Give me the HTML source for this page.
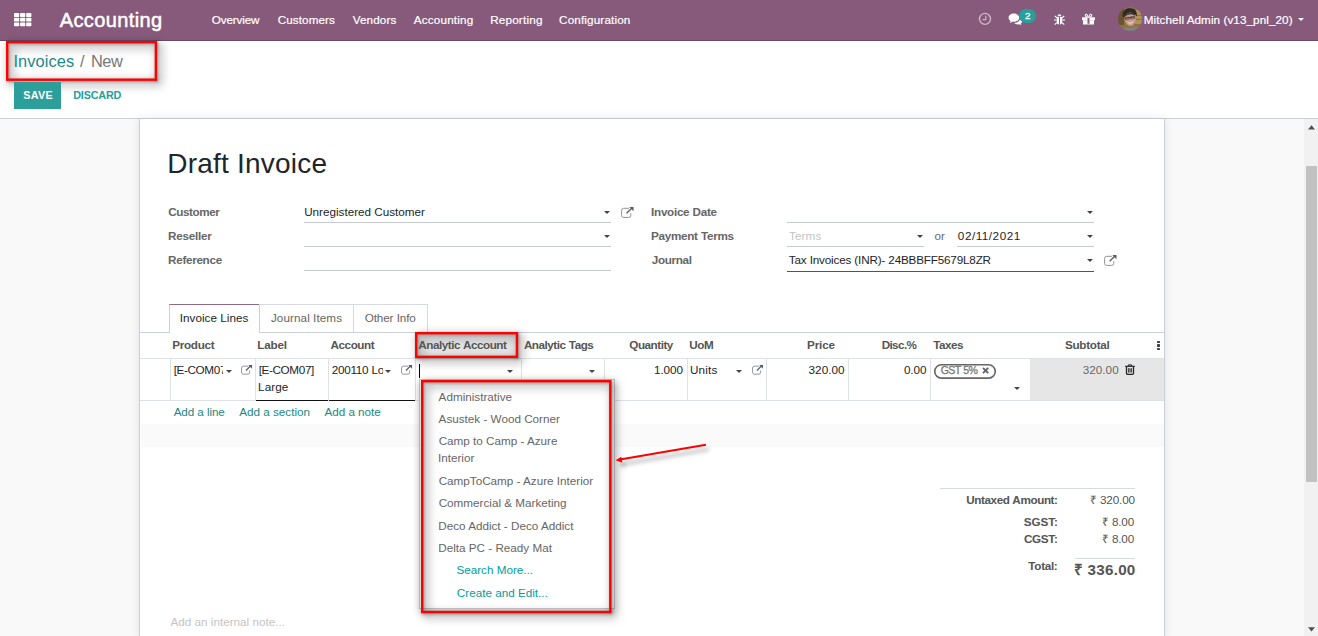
<!DOCTYPE html>
<html lang="en">
<head>
<meta charset="utf-8">
<title>Odoo - Invoices / New</title>
<style>
*{box-sizing:border-box;}
html,body{margin:0;padding:0;}
body{width:1318px;height:636px;overflow:hidden;position:relative;background:#f9f9f9;font-family:"Liberation Sans",sans-serif;font-size:13px;color:#4c4c4c;}
.t{position:absolute;white-space:nowrap;}
.b{position:absolute;}
.ul{position:absolute;height:1px;background:#c8ccd1;}
.caret{position:absolute;width:0;height:0;margin-left:.25px;border-left:3.8px solid transparent;border-right:3.8px solid transparent;border-top:3.9px solid #444;}
.vl{position:absolute;width:1px;background:#dee2e6;}
.hl{position:absolute;height:1px;background:#dee2e6;}
svg{position:absolute;overflow:visible;}
.rb{filter:drop-shadow(1px 1.5px 1.5px rgba(0,0,0,.38)) drop-shadow(3px 3.5px 5px rgba(0,0,0,.55));}

</style>
</head>
<body>
<!-- navbar -->
<div class="b" style="left:0;top:0;width:1318px;height:41px;background:#875a7b;border-bottom:1px solid #6d4964;"></div>
<svg style="left:14px;top:12.800px" width="17.400" height="13.300" viewBox="0 0 17.4 13.3"><g fill="#fff"><rect x="0" y="0" width="5.200" height="3.900" rx=".7"/><rect x="6.1" y="0" width="5.200" height="3.900" rx=".7"/><rect x="12.2" y="0" width="5.200" height="3.900" rx=".7"/><rect x="0" y="4.7" width="5.200" height="3.900" rx=".7"/><rect x="6.1" y="4.7" width="5.200" height="3.900" rx=".7"/><rect x="12.2" y="4.7" width="5.200" height="3.900" rx=".7"/><rect x="0" y="9.4" width="5.200" height="3.900" rx=".7"/><rect x="6.1" y="9.4" width="5.200" height="3.900" rx=".7"/><rect x="12.2" y="9.4" width="5.200" height="3.900" rx=".7"/></g></svg>
<!-- clock -->
<svg style="left:978px;top:12px" width="14" height="14" viewBox="0 0 14 14"><g fill="none" stroke="#cbb6c5" stroke-width="1.4"><circle cx="7" cy="6.9" r="5.5"/><path d="M7.8 3.8V7.6H4.6" stroke-width="1.2"/></g></svg>
<!-- chat -->
<svg style="left:1008px;top:13px" width="16" height="13" viewBox="0 0 16 13"><g fill="#fff"><path d="M5.8 0.6C8.8 0.6 11.2 2.4 11.2 4.7C11.2 7 8.8 8.8 5.8 8.8C5.3 8.8 4.8 8.75 4.4 8.65C3.6 9.3 2.6 9.7 1.5 9.8C2.1 9.3 2.5 8.6 2.6 8C1.4 7.2 0.6 6 0.6 4.7C0.6 2.4 2.9 0.6 5.8 0.6Z"/><path d="M12.2 5.2C13.5 5.8 14.4 6.9 14.4 8.1C14.4 9.2 13.7 10.1 12.7 10.7C12.8 11.2 13.1 11.8 13.6 12.2C12.7 12.1 11.9 11.8 11.2 11.3C10.8 11.4 10.4 11.4 10 11.4C8.4 11.4 7 10.9 6.1 10C9.5 9.9 12.3 7.9 12.2 5.2Z"/></g></svg>
<div class="b" style="left:1019px;top:9px;width:17px;height:14px;border-radius:7px;background:#26a09c;"></div>
<!-- bug -->
<svg style="left:1054px;top:14px" width="11" height="11" viewBox="0 0 11 11"><g fill="#fff"><path d="M3.6 2.2C3.6 1 4.4 0.2 5.5 0.2C6.6 0.2 7.4 1 7.4 2.2Z"/><path d="M2.8 2.9H5V10.6C3.7 10.5 2.8 9.4 2.8 8Z"/><path d="M6 2.9H8.2V8C8.2 9.4 7.3 10.5 6 10.6Z"/></g><g stroke="#fff" stroke-width="1.150" fill="none"><path d="M0 6H2.8M8.2 6H11M0.8 2L2.8 3.8M10.2 2L8.2 3.8M0.8 10.6L2.8 8.6M10.2 10.6L8.2 8.6"/></g></svg>
<!-- gift -->
<svg style="left:1082px;top:12.5px" width="13" height="12" viewBox="0 0 13 12"><g fill="none" stroke="#fff" stroke-width="1.100"><path d="M6.200 4.300C4.400 4.300 3.100 3.300 3.300 2.100C3.600 .8 5.400 .7 6.200 4.300Z"/><path d="M6.800 4.300C8.600 4.300 9.900 3.300 9.700 2.100C9.400 .8 7.600 .7 6.800 4.300Z"/></g><g fill="#fff"><rect x="0" y="4.300" width="5.500" height="2.900"/><rect x="7.500" y="4.300" width="5.500" height="2.900"/><rect x="1" y="7.200" width="4.500" height="4.300"/><rect x="7.500" y="7.200" width="4.500" height="4.300"/><rect x="5.500" y="10.800" width="2" height=".7"/></g></svg>
<!-- avatar -->
<svg style="left:1118px;top:7px" width="24" height="24" viewBox="0 0 24 24"><defs><clipPath id="av"><circle cx="12" cy="12" r="12"/></clipPath><filter id="avb" x="-10%" y="-10%" width="120%" height="120%"><feGaussianBlur stdDeviation=".55"/></filter></defs><g clip-path="url(#av)"><g filter="url(#avb)"><rect x="-2" y="-2" width="28" height="28" fill="#8f7040"/><rect x="-2" y="-2" width="8" height="20" fill="#6b5430"/><rect x="17" y="3" width="9" height="14" fill="#b09258"/><rect x="18" y="8" width="8" height="1" fill="#8b6f42"/><rect x="18" y="12" width="8" height="1" fill="#8b6f42"/><path d="M4.500 9C4.500 3.500 8 1 12.500 1.300C17 1.500 19.500 4.500 18.800 9.500C17.500 7 15 5.800 12 6C9 6.200 6.500 7.500 5.500 10.500Z" fill="#2b2928"/><g transform="rotate(-8 12 12)"><ellipse cx="12" cy="12.300" rx="5.400" ry="6.700" fill="#c99c8c"/><path d="M6.500 9.500Q12 5 17.500 9.300L17.300 7.500Q12 3.800 6.700 7.800Z" fill="#3a3331"/><path d="M6.800 10.600H17.200" stroke="#4a3f3d" stroke-width=".9"/><rect x="7.400" y="9.900" width="3.800" height="2.300" fill="none" stroke="#4a3f3d" stroke-width=".6"/><rect x="12.700" y="9.900" width="3.800" height="2.300" fill="none" stroke="#4a3f3d" stroke-width=".6"/><path d="M9.300 15.400Q12 17.600 15 15.300Q12 16.300 9.300 15.400Z" fill="#f1e2dc" stroke="#e9d2ca" stroke-width=".5"/></g><path d="M2 26C3 21 7.500 19.800 10.500 20.200C12.500 21.200 14.500 20.800 16 19.600C19.500 19.300 23 20.500 25 23V26Z" fill="#7e817d"/></g></g></svg>
<div class="caret" style="left:1298px;top:18px;border-top-color:#fff;"></div>
<!-- control panel -->
<div class="b" style="left:0;top:41px;width:1318px;height:78px;background:#fff;border-bottom:1px solid #ccd0d4;"></div>
<svg class="rb" style="left:6px;top:40.8px" width="151.1" height="39.900000000000006" viewBox="0 0 151.1 39.900000000000006"><rect x="1.2" y="1.2" width="148.70" height="37.50" fill="none" stroke="#ff0000" stroke-width="2.4"/></svg>
<div class="b" style="left:14px;top:82px;width:47px;height:26.5px;background:#2d9f9b;"></div>
<!-- content -->
<div class="b" style="left:0;top:119px;width:1304px;height:517px;background:#f9f9f9;"></div>
<div class="b" style="left:139px;top:119px;width:1026px;height:520px;background:#fff;border-left:1px solid #c9cfd8;border-right:1px solid #c9cfd8;box-shadow:0 0 9px rgba(0,0,0,.10);"></div>
<!-- scrollbar -->
<div class="b" style="left:1304px;top:119px;width:14px;height:517px;background:#f1f1f1;"></div>
<div class="b" style="left:1306px;top:166px;width:11px;height:316px;background:#c1c1c1;"></div>
<svg style="left:1308px;top:124.5px" width="7" height="5" viewBox="0 0 7 5"><path d="M0 4.5L3.5 0.3L7 4.5Z" fill="#505050"/></svg>
<svg style="left:1308px;top:626.5px" width="7" height="5" viewBox="0 0 7 5"><path d="M0 0.3L3.5 4.5L7 0.3Z" fill="#505050"/></svg>
<!-- form underlines -->
<div class="ul" style="left:304px;top:222px;width:307px;"></div>
<div class="ul" style="left:304px;top:246px;width:307px;"></div>
<div class="ul" style="left:304px;top:270px;width:307px;"></div>
<div class="ul" style="left:787px;top:222px;width:307px;"></div>
<div class="ul" style="left:787px;top:246px;width:137px;"></div>
<div class="ul" style="left:957px;top:246px;width:137px;"></div>
<div class="ul" style="left:787px;top:270.5px;width:307px;background:#555;height:1.3px;"></div>
<div class="caret" style="left:604px;top:211px;"></div>
<div class="caret" style="left:604px;top:235px;"></div>
<div class="caret" style="left:1087px;top:211px;"></div>
<div class="caret" style="left:917px;top:235px;"></div>
<div class="caret" style="left:1087px;top:235px;"></div>
<div class="caret" style="left:1087px;top:259px;"></div>
<svg class="ext" style="left:621px;top:207px" width="13" height="11" viewBox="0 0 13 11"><path d="M8 1.3H2.7A2.1 2.1 0 0 0 .6 3.400V8.300A2.100 2.100 0 0 0 2.700 10.400H7.700A2.100 2.100 0 0 0 9.800 8.300V6.2" fill="none" stroke="#8e9399" stroke-width="1"/><path d="M5.600 6.200L11 .9" stroke="#5a5d61" stroke-width="1.35"/><path d="M8.300 0H12.500V4.200Z" fill="#5a5d61"/></svg>
<svg class="ext" style="left:1104px;top:255px" width="13" height="11" viewBox="0 0 13 11"><path d="M8 1.3H2.7A2.1 2.1 0 0 0 .6 3.400V8.300A2.100 2.100 0 0 0 2.700 10.400H7.700A2.100 2.100 0 0 0 9.800 8.300V6.2" fill="none" stroke="#8e9399" stroke-width="1"/><path d="M5.600 6.200L11 .9" stroke="#5a5d61" stroke-width="1.35"/><path d="M8.300 0H12.500V4.200Z" fill="#5a5d61"/></svg>
<!-- tabs -->
<div class="hl" style="left:140px;top:332px;width:1024px;background:#ccd0d9;"></div>
<div class="b" style="left:169px;top:304px;width:91px;height:29px;background:#fff;border:1px solid #ccd0d9;border-top-color:#8f6a86;border-bottom:none;"></div>
<div class="b" style="left:259px;top:304px;width:95px;height:28px;border-top:1px solid #d5d9e0;border-right:1px solid #d5d9e0;"></div>
<div class="b" style="left:353px;top:304px;width:75px;height:28px;border-top:1px solid #d5d9e0;border-right:1px solid #d5d9e0;"></div>
<!-- table -->
<div class="b" style="left:1029.5px;top:358.5px;width:134.5px;height:42px;background:#e6e6e6;"></div>
<div class="hl" style="left:140px;top:358px;width:1024px;"></div>
<div class="hl" style="left:140px;top:400px;width:1024px;"></div>
<div class="vl" style="left:170px;top:358px;height:42px;"></div>
<div class="vl" style="left:255px;top:358px;height:42px;"></div>
<div class="vl" style="left:328px;top:358px;height:42px;"></div>
<div class="vl" style="left:415px;top:358px;height:42px;"></div>
<div class="vl" style="left:521px;top:358px;height:42px;"></div>
<div class="vl" style="left:604px;top:358px;height:42px;"></div>
<div class="vl" style="left:687px;top:358px;height:42px;"></div>
<div class="vl" style="left:766px;top:358px;height:42px;"></div>
<div class="vl" style="left:848px;top:358px;height:42px;"></div>
<div class="vl" style="left:930px;top:358px;height:42px;"></div>
<div class="b" style="left:255.5px;top:399.5px;width:72px;height:1.4px;background:#111;"></div>
<div class="b" style="left:328.8px;top:399.5px;width:86.2px;height:1.4px;background:#111;"></div>
<div class="b" style="left:419px;top:364px;width:1px;height:14px;background:#000;"></div>
<div class="caret" style="left:225.5px;top:370px;"></div>
<div class="caret" style="left:385.2px;top:370px;"></div>
<div class="caret" style="left:506.5px;top:370px;"></div>
<div class="caret" style="left:589px;top:370px;"></div>
<div class="caret" style="left:736.2px;top:370px;"></div>
<div class="caret" style="left:1013.7px;top:386.5px;"></div>
<svg class="ext" style="left:240.7px;top:364.500px" width="11.500" height="9.700" viewBox="0 0 13 11"><path d="M8 1.3H2.7A2.1 2.1 0 0 0 .6 3.400V8.300A2.100 2.100 0 0 0 2.700 10.400H7.700A2.100 2.100 0 0 0 9.800 8.300V6.2" fill="none" stroke="#8e9399" stroke-width="1.1"/><path d="M5.600 6.200L11 .9" stroke="#5a5d61" stroke-width="1.35"/><path d="M8.300 0H12.500V4.200Z" fill="#5a5d61"/></svg>
<svg class="ext" style="left:400.7px;top:364.500px" width="11.500" height="9.700" viewBox="0 0 13 11"><path d="M8 1.3H2.7A2.1 2.1 0 0 0 .6 3.400V8.300A2.100 2.100 0 0 0 2.700 10.400H7.700A2.100 2.100 0 0 0 9.800 8.300V6.2" fill="none" stroke="#8e9399" stroke-width="1.1"/><path d="M5.600 6.200L11 .9" stroke="#5a5d61" stroke-width="1.35"/><path d="M8.300 0H12.500V4.200Z" fill="#5a5d61"/></svg>
<svg class="ext" style="left:751.5px;top:364.500px" width="11.500" height="9.700" viewBox="0 0 13 11"><path d="M8 1.3H2.7A2.1 2.1 0 0 0 .6 3.400V8.300A2.100 2.100 0 0 0 2.700 10.400H7.700A2.100 2.100 0 0 0 9.800 8.300V6.2" fill="none" stroke="#8e9399" stroke-width="1.1"/><path d="M5.600 6.200L11 .9" stroke="#5a5d61" stroke-width="1.35"/><path d="M8.300 0H12.500V4.200Z" fill="#5a5d61"/></svg>
<!-- tag -->
<svg style="left:933px;top:363px" width="64" height="17" viewBox="0 0 64 17"><rect x="1.750" y="1.800" width="60.500" height="13.300" rx="6.650" fill="#fff" stroke="#666" stroke-width="1.600"/></svg>
<svg style="left:982px;top:367px" width="7.200" height="7" viewBox="0 0 7.2 7"><path d="M1 .9L6.200 6.100M6.200 .9L1 6.100" stroke="#666" stroke-width="2" fill="none"/></svg>
<!-- kebab -->
<div class="b" style="left:1157px;top:341px;width:3px;height:2.4px;background:#444;border-radius:.6px;"></div>
<div class="b" style="left:1157px;top:344.3px;width:3px;height:2.4px;background:#444;border-radius:.6px;"></div>
<div class="b" style="left:1157px;top:347.6px;width:3px;height:2.4px;background:#444;border-radius:.6px;"></div>
<!-- trash -->
<svg style="left:1125px;top:364px" width="10" height="11" viewBox="0 0 10 11"><g fill="none" stroke="#222" ><path d="M.2 2.300H9.800" stroke-width="1.200"/><path d="M3.400 2V.9H6.600V2" stroke-width="1"/><path d="M1.500 2.600V9.300A1.100 1.100 0 0 0 2.600 10.400H7.400A1.100 1.100 0 0 0 8.500 9.300V2.600" stroke-width="1.300"/><path d="M3.600 4.200V8.600M5 4.200V8.600M6.400 4.200V8.600" stroke-width=".9"/></g></svg>
<!-- gray band -->
<div class="b" style="left:140.500px;top:423.500px;width:1023.500px;height:23px;background:#fafafa;"></div>
<!-- totals lines -->
<div class="hl" style="left:940px;top:488px;width:195px;background:#d6dae0;"></div>
<div class="hl" style="left:1075px;top:558px;width:60px;background:#d6dae0;"></div>
<!-- analytic header box -->
<svg class="rb" style="left:415px;top:331.9px" width="103.20000000000005" height="26.100000000000023" viewBox="0 0 103.20000000000005 26.100000000000023"><rect x="1.2" y="1.2" width="100.80" height="23.70" fill="rgba(0,0,0,.05)" stroke="#ff0000" stroke-width="2.4"/></svg>
<!-- dropdown -->
<div class="b" style="left:419px;top:379px;width:196px;height:229.500px;background:#fff;border:1px solid #c4c4c4;box-shadow:0 3px 7px rgba(0,0,0,.18);"></div>
<svg class="rb" style="left:420.8px;top:379.8px" width="190.49999999999994" height="233.2" viewBox="0 0 190.49999999999994 233.2"><rect x="1.2" y="1.2" width="188.10" height="230.80" fill="none" stroke="#ff0000" stroke-width="2.4"/></svg>
<!-- arrow -->
<svg style="left:610px;top:436px" width="104" height="36" viewBox="0 0 104 36"><defs><filter id="sh" x="-10%" y="-60%" width="125%" height="260%"><feDropShadow dx="3" dy="4.5" stdDeviation="2.2" flood-color="#000" flood-opacity=".38"/></filter></defs><g filter="url(#sh)"><path d="M95.900 8.800L10 23.500" stroke="#ff0000" stroke-width="2.100" fill="none"/><path d="M5.600 24.300L11.300 20.800L12.300 26.800Z" fill="#ff0000"/></g></svg>

<div class="t" style="left:59.71px;top:7px;font-size:20px;line-height:26px;color:#fff;letter-spacing:0.392px;word-spacing:-0.392px;-webkit-text-stroke:0.5px #fff;">Accounting</div>
<div class="t" style="left:211.84px;top:12px;font-size:11.7px;line-height:16px;color:#fff;letter-spacing:-0.161px;word-spacing:0.161px;-webkit-text-stroke:0.2px #fff;">Overview</div>
<div class="t" style="left:277.69px;top:12px;font-size:11.7px;line-height:16px;color:#fff;letter-spacing:0.095px;word-spacing:-0.095px;-webkit-text-stroke:0.2px #fff;">Customers</div>
<div class="t" style="left:352.64px;top:12px;font-size:11.7px;line-height:16px;color:#fff;letter-spacing:0.135px;word-spacing:-0.135px;-webkit-text-stroke:0.2px #fff;">Vendors</div>
<div class="t" style="left:413.70px;top:12px;font-size:11.7px;line-height:16px;color:#fff;letter-spacing:0.193px;word-spacing:-0.193px;-webkit-text-stroke:0.2px #fff;">Accounting</div>
<div class="t" style="left:490.15px;top:12px;font-size:11.7px;line-height:16px;color:#fff;letter-spacing:0.195px;word-spacing:-0.195px;-webkit-text-stroke:0.2px #fff;">Reporting</div>
<div class="t" style="left:559.09px;top:12px;font-size:11.7px;line-height:16px;color:#fff;letter-spacing:0.142px;word-spacing:-0.142px;-webkit-text-stroke:0.2px #fff;">Configuration</div>
<div class="t" style="left:1143.79px;top:12px;font-size:11.7px;line-height:16px;color:#fff;letter-spacing:0.083px;word-spacing:-0.083px;-webkit-text-stroke:0.2px #fff;">Mitchell Admin (v13_pnl_20)</div>
<div class="t" style="left:1024.93px;top:8px;font-size:9.8px;line-height:16px;color:#fff;-webkit-text-stroke:0.3px #fff;">2</div>
<div class="t" style="left:13.41px;top:51px;font-size:16.4px;line-height:21px;color:#1b8886;letter-spacing:0.089px;word-spacing:-0.089px;">Invoices</div>
<div class="t" style="left:80.03px;top:51px;font-size:16.4px;line-height:21px;color:#777;">/</div>
<div class="t" style="left:91.06px;top:51px;font-size:16.4px;line-height:21px;color:#777;letter-spacing:-0.555px;word-spacing:0.555px;">New</div>
<div class="t" style="left:23.18px;top:87px;font-size:10.8px;line-height:16px;color:#fff;font-weight:bold;letter-spacing:0.298px;word-spacing:-0.298px;">SAVE</div>
<div class="t" style="left:73.18px;top:87px;font-size:10.8px;line-height:16px;color:#1fa09c;font-weight:bold;letter-spacing:-0.163px;word-spacing:0.163px;">DISCARD</div>
<div class="t" style="left:167.16px;top:146px;font-size:28px;line-height:36px;color:#212529;letter-spacing:0.255px;word-spacing:-0.255px;">Draft Invoice</div>
<div class="t" style="left:168.33px;top:204px;font-size:11.7px;line-height:16px;color:#666;font-weight:bold;letter-spacing:-0.430px;word-spacing:0.430px;">Customer</div>
<div class="t" style="left:168.07px;top:228px;font-size:11.7px;line-height:16px;color:#666;font-weight:bold;letter-spacing:-0.241px;word-spacing:0.241px;">Reseller</div>
<div class="t" style="left:168.07px;top:252px;font-size:11.7px;line-height:16px;color:#666;font-weight:bold;letter-spacing:-0.307px;word-spacing:0.307px;">Reference</div>
<div class="t" style="left:304.18px;top:204px;font-size:11.7px;line-height:16px;color:#212529;">Unregistered Customer</div>
<div class="t" style="left:651.07px;top:204px;font-size:11.7px;line-height:16px;color:#666;font-weight:bold;letter-spacing:-0.286px;word-spacing:0.286px;">Invoice Date</div>
<div class="t" style="left:651.07px;top:228px;font-size:11.7px;line-height:16px;color:#666;font-weight:bold;letter-spacing:-0.295px;word-spacing:0.295px;">Payment Terms</div>
<div class="t" style="left:651.80px;top:252px;font-size:11.7px;line-height:16px;color:#666;font-weight:bold;letter-spacing:-0.331px;word-spacing:0.331px;">Journal</div>
<div class="t" style="left:788.92px;top:228px;font-size:11.7px;line-height:16px;color:#c4c4c4;letter-spacing:0.152px;word-spacing:-0.152px;">Terms</div>
<div class="t" style="left:934.57px;top:228px;font-size:11.7px;line-height:16px;color:#666;">or</div>
<div class="t" style="left:957.86px;top:228px;font-size:11.7px;line-height:16px;color:#212529;letter-spacing:0.523px;word-spacing:-0.523px;">02/11/2021</div>
<div class="t" style="left:788.81px;top:252px;font-size:11.7px;line-height:16px;color:#212529;letter-spacing:-0.181px;word-spacing:0.181px;">Tax Invoices (INR)- 24BBBFF5679L8ZR</div>
<div class="t" style="left:179.76px;top:310px;font-size:11.7px;line-height:16px;color:#212529;letter-spacing:0.033px;word-spacing:-0.033px;">Invoice Lines</div>
<div class="t" style="left:270.94px;top:310px;font-size:11.7px;line-height:16px;color:#666;letter-spacing:0.080px;word-spacing:-0.080px;">Journal Items</div>
<div class="t" style="left:364.65px;top:310px;font-size:11.7px;line-height:16px;color:#666;letter-spacing:-0.097px;word-spacing:0.097px;">Other Info</div>
<div class="t" style="left:172.30px;top:337px;font-size:11.7px;line-height:16px;color:#555;font-weight:bold;letter-spacing:-0.320px;word-spacing:0.320px;">Product</div>
<div class="t" style="left:257.30px;top:337px;font-size:11.7px;line-height:16px;color:#555;font-weight:bold;letter-spacing:-0.231px;word-spacing:0.231px;">Label</div>
<div class="t" style="left:330.58px;top:337px;font-size:11.7px;line-height:16px;color:#555;font-weight:bold;letter-spacing:-0.456px;word-spacing:0.456px;">Account</div>
<div class="t" style="left:418.28px;top:337px;font-size:11.7px;line-height:16px;color:#555;font-weight:bold;letter-spacing:-0.456px;word-spacing:0.456px;">Analytic Account</div>
<div class="t" style="left:523.90px;top:337px;font-size:11.7px;line-height:16px;color:#555;font-weight:bold;letter-spacing:-0.471px;word-spacing:0.471px;">Analytic Tags</div>
<div class="t" style="left:629.33px;top:337px;font-size:11.7px;line-height:16px;color:#555;font-weight:bold;letter-spacing:-0.483px;word-spacing:0.483px;">Quantity</div>
<div class="t" style="left:689.25px;top:337px;font-size:11.7px;line-height:16px;color:#555;font-weight:bold;letter-spacing:-0.375px;word-spacing:0.375px;">UoM</div>
<div class="t" style="left:807.07px;top:337px;font-size:11.7px;line-height:16px;color:#555;font-weight:bold;letter-spacing:-0.143px;word-spacing:0.143px;">Price</div>
<div class="t" style="left:881.66px;top:337px;font-size:11.7px;line-height:16px;color:#555;font-weight:bold;letter-spacing:-0.610px;word-spacing:0.610px;">Disc.%</div>
<div class="t" style="left:933.31px;top:337px;font-size:11.7px;line-height:16px;color:#555;font-weight:bold;letter-spacing:-0.500px;word-spacing:0.500px;">Taxes</div>
<div class="t" style="left:1064.98px;top:337px;font-size:11.7px;line-height:16px;color:#555;font-weight:bold;letter-spacing:-0.269px;word-spacing:0.269px;">Subtotal</div>
<div class="t" style="left:258.64px;top:362px;font-size:11.7px;line-height:16px;color:#212529;letter-spacing:-0.350px;word-spacing:0.350px;">[E-COM07]</div>
<div class="t" style="left:173.64px;top:362px;font-size:11.7px;line-height:16px;color:#212529;letter-spacing:-0.350px;word-spacing:0.350px;width:49.5px;overflow:hidden;">[E-COM07]</div>
<div class="t" style="left:258.09px;top:379px;font-size:11.7px;line-height:16px;color:#212529;letter-spacing:0.074px;word-spacing:-0.074px;">Large</div>
<div class="t" style="left:331.67px;top:362px;font-size:11.7px;line-height:16px;color:#212529;letter-spacing:-0.250px;word-spacing:0.250px;width:51.7px;overflow:hidden;">200110 Local</div>
<div class="t" style="left:654.07px;top:362px;font-size:11.7px;line-height:16px;color:#212529;letter-spacing:-0.105px;word-spacing:0.105px;">1.000</div>
<div class="t" style="left:689.93px;top:362px;font-size:11.7px;line-height:16px;color:#212529;letter-spacing:0.182px;word-spacing:-0.182px;">Units</div>
<div class="t" style="left:808.52px;top:362px;font-size:11.7px;line-height:16px;color:#212529;letter-spacing:0.056px;word-spacing:-0.056px;">320.00</div>
<div class="t" style="left:903.89px;top:362px;font-size:11.7px;line-height:16px;color:#212529;letter-spacing:-0.033px;word-spacing:0.033px;">0.00</div>
<div class="t" style="left:940.75px;top:362px;font-size:10.5px;line-height:16px;color:#777;letter-spacing:-0.591px;word-spacing:0.591px;-webkit-text-stroke:0.3px #777;">GST 5%</div>
<div class="t" style="left:1082.80px;top:362px;font-size:11.7px;line-height:16px;color:#666;letter-spacing:0.019px;word-spacing:-0.019px;">320.00</div>
<div class="t" style="left:173.71px;top:404px;font-size:11.7px;line-height:16px;color:#1b8886;letter-spacing:-0.126px;word-spacing:0.126px;">Add a line</div>
<div class="t" style="left:239.13px;top:404px;font-size:11.7px;line-height:16px;color:#1b8886;letter-spacing:0.013px;word-spacing:-0.013px;">Add a section</div>
<div class="t" style="left:324.47px;top:404px;font-size:11.7px;line-height:16px;color:#1b8886;letter-spacing:-0.035px;word-spacing:0.035px;">Add a note</div>
<div class="t" style="left:170.47px;top:614px;font-size:11.7px;line-height:16px;color:#c4c4c4;letter-spacing:0.007px;word-spacing:-0.007px;">Add an internal note...</div>
<div class="t" style="left:438.61px;top:389px;font-size:11.7px;line-height:16px;color:#666;">Administrative</div>
<div class="t" style="left:438.61px;top:411px;font-size:11.7px;line-height:16px;color:#666;">Asustek - Wood Corner</div>
<div class="t" style="left:438.65px;top:433px;font-size:11.7px;line-height:16px;color:#666;">Camp to Camp - Azure</div>
<div class="t" style="left:437.97px;top:450px;font-size:11.7px;line-height:16px;color:#666;">Interior</div>
<div class="t" style="left:438.65px;top:473px;font-size:11.7px;line-height:16px;color:#666;">CampToCamp - Azure Interior</div>
<div class="t" style="left:438.65px;top:495px;font-size:11.7px;line-height:16px;color:#666;">Commercial &amp; Marketing</div>
<div class="t" style="left:438.25px;top:518px;font-size:11.7px;line-height:16px;color:#666;">Deco Addict - Deco Addict</div>
<div class="t" style="left:438.25px;top:540px;font-size:11.7px;line-height:16px;color:#666;">Delta PC - Ready Mat</div>
<div class="t" style="left:456.42px;top:562px;font-size:11.7px;line-height:16px;color:#00a09d;">Search More...</div>
<div class="t" style="left:456.86px;top:585px;font-size:11.7px;line-height:16px;color:#00a09d;">Create and Edit...</div>
<div class="t" style="left:966.20px;top:492px;font-size:11.7px;line-height:16px;color:#555;font-weight:bold;letter-spacing:-0.395px;word-spacing:0.395px;">Untaxed Amount:</div>
<div class="t" style="left:1023.80px;top:514px;font-size:11.7px;line-height:16px;color:#555;font-weight:bold;letter-spacing:-0.079px;word-spacing:0.079px;">SGST:</div>
<div class="t" style="left:1023.91px;top:531px;font-size:11.7px;line-height:16px;color:#555;font-weight:bold;letter-spacing:-0.297px;word-spacing:0.297px;">CGST:</div>
<div class="t" style="left:1028.35px;top:558px;font-size:11.7px;line-height:16px;color:#555;font-weight:bold;letter-spacing:-0.305px;word-spacing:0.305px;">Total:</div>
<div class="t" style="left:1089.85px;top:492px;font-size:11.7px;line-height:16px;color:#555;letter-spacing:-0.120px;word-spacing:0.120px;">₹ 320.00</div>
<div class="t" style="left:1101.85px;top:514px;font-size:11.7px;line-height:16px;color:#555;letter-spacing:-0.175px;word-spacing:0.175px;">₹ 8.00</div>
<div class="t" style="left:1101.85px;top:531px;font-size:11.7px;line-height:16px;color:#555;letter-spacing:-0.175px;word-spacing:0.175px;">₹ 8.00</div>
<div class="t" style="left:1074.17px;top:560px;font-size:15.2px;line-height:20px;color:#555;font-weight:bold;letter-spacing:0.245px;word-spacing:-0.245px;">₹ 336.00</div>
</body>
</html>
